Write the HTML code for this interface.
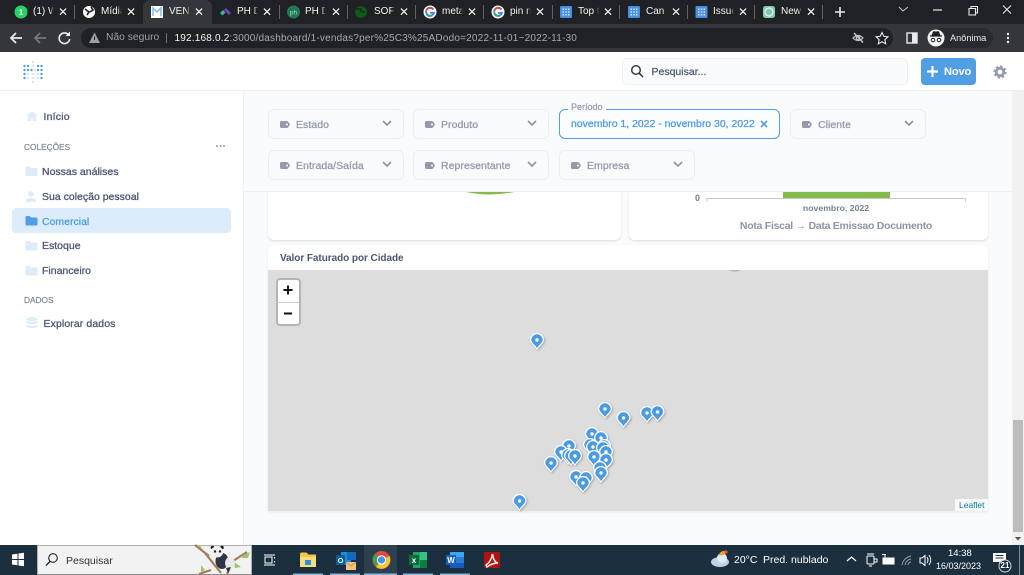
<!DOCTYPE html>
<html lang="pt"><head><meta charset="utf-8"><title>VENDAS</title>
<style>
*{box-sizing:border-box}
html,body{margin:0;padding:0;width:1024px;height:575px;overflow:hidden;background:#fff;font-family:"Liberation Sans",sans-serif}
.a{position:absolute}
.t{position:absolute;white-space:nowrap;line-height:1}
svg{position:absolute;overflow:visible}
.tab{position:absolute;top:5px;color:#f1f3f4;font-size:10px;line-height:14px;white-space:nowrap;overflow:hidden;-webkit-mask-image:linear-gradient(90deg,#000 80%,transparent);mask-image:linear-gradient(90deg,#000 80%,transparent)}
.x{position:absolute;top:6px;color:#f1f3f4;font-size:12px;line-height:12px}
.sep{position:absolute;top:5px;width:1px;height:14px;background:#5f6368}
.side{position:absolute;font-size:10.500px;color:#4c5773;line-height:12px;white-space:nowrap;-webkit-text-stroke:.3px currentColor}
.sec{position:absolute;font-size:8.300px;color:#74838f;line-height:10px;-webkit-text-stroke:.15px currentColor}
.f{position:absolute;height:30px;background:#f9fbfc;border:1.500px solid #eceff2;border-radius:6px}
.fl{position:absolute;top:8.500px;left:27px;font-size:10.500px;color:#949aab;line-height:12px;white-space:nowrap;-webkit-text-stroke:.3px currentColor;letter-spacing:.05px}
</style></head><body>
<svg width="0" height="0" style="position:absolute"><defs>
<g id="pin"><path d="M0 7C-1.500 3.500-7 .5-7-3A7 7 0 0 1 7-3C7 .5 1.500 3.500 0 7Z" fill="#fff"/><path d="M0 5.200C-1.500 2.200-5.700 -.2-5.700-3A5.700 5.700 0 0 1 5.700-3C5.700-.2 1.500 2.200 0 5.200Z" fill="#4a9be0"/><circle cy="-3" r="1.700" fill="#fff"/></g>
<g id="tag"><path d="M0 1.500Q0 0 1.500 0H6.500Q7.500 0 8 .5L10 3.500 8 6.500Q7.500 7 6.500 7H1.500Q0 7 0 5.500Z" fill="#949aab"/><circle cx="7" cy="3.500" r="1" fill="#f9fbfc"/></g>
<path id="chev" d="M0 0L4 4 8 0" fill="none" stroke="#8a93a3" stroke-width="1.600"/>
<path id="fold" d="M0 1.200Q0 0 1.200 0H4L5.500 1.500H10.800Q12 1.500 12 2.700V8.300Q12 9.500 10.800 9.500H1.200Q0 9.500 0 8.300Z"/>
<g id="dots" fill="#cfe4fa"><rect x="2.500" y="2.500" width="1.500" height="1.500"/><rect x="5.300" y="2.500" width="1.500" height="1.500"/><rect x="8" y="2.500" width="1.500" height="1.500"/><rect x="2.500" y="5.300" width="1.500" height="1.500"/><rect x="5.300" y="5.300" width="1.500" height="1.500"/><rect x="8" y="5.300" width="1.500" height="1.500"/><rect x="2.500" y="8" width="1.500" height="1.500"/><rect x="5.300" y="8" width="1.500" height="1.500"/><rect x="8" y="8" width="1.500" height="1.500"/></g>
</defs></svg>

<!-- tab strip -->
<div class="a" style="left:0;top:0;width:1024px;height:24px;background:#202124"></div>
<div class="a" style="left:143px;top:0;width:69px;height:24px;background:#35363a;border-radius:7px 7px 0 0"></div>
<div class="a" style="left:0;top:24px;width:1024px;height:28px;background:#35363a"></div>

<svg style="left:0;top:0" width="830" height="24">
<circle cx="21" cy="12" r="6.500" fill="#25d366"/><text x="21" y="15" font-size="8" font-weight="bold" fill="#fff" text-anchor="middle" font-family="Liberation Sans">1</text>
<circle cx="89" cy="12" r="6" fill="#fff"/><path d="M85 9l4 3-2 3M91 7l2 3-3 2" stroke="#202124" stroke-width="1.600" fill="none"/>
<rect x="151" y="6" width="12" height="12" fill="#fff"/><path d="M153 16V8l4 4 4-4v8" stroke="#8cc0ee" stroke-width="1.600" fill="none"/>
<path d="M220 13l3-3 2.500 2.500-3 3z" fill="#33b5a5"/><path d="M224 10l2-2 5 5-2 2z" fill="#7a3fc4"/>
<circle cx="293.500" cy="12" r="6.500" fill="#1f7a58"/><text x="293.500" y="14.500" font-size="6.500" fill="#a9d8c0" text-anchor="middle" font-family="Liberation Sans">ph</text>
<circle cx="361" cy="12" r="5.800" fill="#0d5c16"/><path d="M356 9h5v3h4" stroke="#202124" stroke-width="1.300" fill="none"/>
<circle cx="430" cy="12" r="6.500" fill="#fff"/><path d="M433.500 9.500A4 4 0 1 0 434 12.800H430" fill="none" stroke="#4285f4" stroke-width="1.800"/><path d="M426.500 10A4 4 0 0 1 433 9.300" fill="none" stroke="#ea4335" stroke-width="1.800"/><path d="M426.400 13.800A4 4 0 0 0 432 15.500" fill="none" stroke="#34a853" stroke-width="1.800"/>
<circle cx="498" cy="12" r="6.500" fill="#fff"/><path d="M501.500 9.500A4 4 0 1 0 502 12.800H498" fill="none" stroke="#4285f4" stroke-width="1.800"/><path d="M494.500 10A4 4 0 0 1 501 9.300" fill="none" stroke="#ea4335" stroke-width="1.800"/><path d="M494.400 13.800A4 4 0 0 0 500 15.500" fill="none" stroke="#34a853" stroke-width="1.800"/>
<g fill="#4a90e2"><rect x="560" y="6" width="12" height="12" rx="1.500"/><rect x="628" y="6" width="12" height="12" rx="1.500"/><rect x="695.500" y="6" width="12" height="12" rx="1.500"/></g>
<use href="#dots" x="560" y="6"/><use href="#dots" x="628" y="6"/><use href="#dots" x="695.500" y="6"/>
<rect x="763" y="6" width="12" height="12" rx="2.500" fill="#7fc8ad"/><circle cx="769" cy="12" r="4" fill="none" stroke="#d8efe6" stroke-width="1.500"/>
<path d="M835 12h10M840 7v10" stroke="#e8eaed" stroke-width="1.600"/>
</svg>
<div class="tab" style="left:33px;width:21px">(1) W</div><div class="x" style="left:58px">✕</div><div class="sep" style="left:74px"></div>
<div class="tab" style="left:101px;width:21px">Mídia</div><div class="x" style="left:126px">✕</div>
<div class="tab" style="left:169px;width:21px">VEND</div><div class="x" style="left:194px">✕</div>
<div class="tab" style="left:237px;width:21px">PH D</div><div class="x" style="left:262px">✕</div><div class="sep" style="left:279px"></div>
<div class="tab" style="left:305px;width:21px">PH D</div><div class="x" style="left:331px">✕</div><div class="sep" style="left:347px"></div>
<div class="tab" style="left:374px;width:21px">SOFT</div><div class="x" style="left:399px">✕</div><div class="sep" style="left:415px"></div>
<div class="tab" style="left:442px;width:21px">meta</div><div class="x" style="left:467px">✕</div><div class="sep" style="left:483px"></div>
<div class="tab" style="left:510px;width:21px">pin n</div><div class="x" style="left:535px">✕</div><div class="sep" style="left:552px"></div>
<div class="tab" style="left:578px;width:21px">Top t</div><div class="x" style="left:603px">✕</div><div class="sep" style="left:619px"></div>
<div class="tab" style="left:646px;width:21px">Can t</div><div class="x" style="left:671px">✕</div><div class="sep" style="left:687px"></div>
<div class="tab" style="left:713px;width:21px">Issue</div><div class="x" style="left:738px">✕</div><div class="sep" style="left:754px"></div>
<div class="tab" style="left:781px;width:21px">New</div><div class="x" style="left:806px">✕</div><div class="sep" style="left:822px"></div>

<svg style="left:0;top:0" width="1024" height="52">
<path d="M899 7l4 4 5-4" fill="none" stroke="#c9cbce" stroke-width="1"/>
<path d="M933 10h9" stroke="#e8eaed" stroke-width="1.200"/>
<path d="M969 8.500h6.500v6.500H969zM971 8.500V6.500h6.500V13H975.500" fill="none" stroke="#e8eaed" stroke-width="1.100"/>
<path d="M1003 5.500l8 8M1011 5.500l-8 8" stroke="#e8eaed" stroke-width="1.100"/>
<path d="M22 38H11.500M16 33l-5 5 5 5" fill="none" stroke="#e8eaed" stroke-width="1.800"/>
<path d="M46 38H35.500M40 33l-5 5 5 5" fill="none" stroke="#74777b" stroke-width="1.800"/>
<path d="M69 35.500A5.300 5.300 0 1 0 69.700 39" fill="none" stroke="#e8eaed" stroke-width="1.600"/><path d="M70 31.500V36h-4.500z" fill="#e8eaed"/>
<path d="M91 28H883A10 10 0 0 1 883 48H91A10 10 0 0 1 91 28Z" fill="#202124"/>
<path d="M94.500 32.500L100 43H89Z" fill="#9aa0a6"/><path d="M94.500 36.500V40" stroke="#202124" stroke-width="1"/>
<path d="M166.500 33v10" stroke="#6f7276"/>
<g fill="none" stroke="#c4c7c9" stroke-width="1.200"><path d="M853 38q5-5 10 0q-5 5-10 0z"/><circle cx="858" cy="38" r="1.700"/><path d="M854 33l9 9.500" stroke-width="1.500"/></g>
<path d="M882 32.500l1.800 3.800 4.100.5-3 2.900.8 4.100-3.700-2-3.700 2 .8-4.100-3-2.900 4.100-.5z" fill="none" stroke="#e8eaed" stroke-width="1.100"/>
<rect x="907" y="33" width="10" height="10" fill="none" stroke="#e8eaed" stroke-width="1.400"/><rect x="912" y="33" width="5" height="10" fill="#e8eaed"/>
<path d="M939 28H983A10 10 0 0 1 983 48H939A10 10 0 0 1 939 28Z" fill="#292a2d"/>
<circle cx="936" cy="38" r="8.500" fill="#f1f3f4"/><path d="M930 36h12M932 36l1.500-4h5l1.500 4" stroke="#202124" stroke-width="1.200" fill="#202124"/><circle cx="933" cy="40" r="1.800" fill="none" stroke="#202124"/><circle cx="939" cy="40" r="1.800" fill="none" stroke="#202124"/>
<g fill="#e8eaed"><circle cx="1008" cy="34" r="1.200"/><circle cx="1008" cy="38" r="1.200"/><circle cx="1008" cy="42" r="1.200"/></g>
</svg>
<div class="t" style="left:106px;top:33px;font-size:10.300px;color:#9aa0a6">Não seguro</div>
<div class="t" style="left:174.500px;top:33.500px;font-size:10px;color:#a6a9ad;letter-spacing:.02em"><span style="color:#f1f3f4">192.168.0.2</span>:3000/dashboard/1-vendas?per%25C3%25ADodo=2022-11-01~2022-11-30</div>
<div class="t" style="left:950px;top:33.500px;font-size:9.200px;color:#e8eaed">Anônima</div>

<!-- app header -->
<div class="a" style="left:0;top:52px;width:1024px;height:39px;background:#fff;border-bottom:1px solid #f0f0f0"></div>
<svg style="left:22px;top:58px" width="24" height="28">
<g fill="#509ee3"><circle cx="2.500" cy="8" r="1.200"/><circle cx="6" cy="8" r="1.200"/><circle cx="16" cy="8" r="1.200"/><circle cx="19.500" cy="8" r="1.200"/><circle cx="2.500" cy="12" r="1.200"/><circle cx="6" cy="12" r="1.200"/><circle cx="9.500" cy="12" r="1.200"/><circle cx="16" cy="12" r="1.200"/><circle cx="19.500" cy="12" r="1.200"/><circle cx="2.500" cy="16" r="1.200"/><circle cx="19.500" cy="16" r="1.200"/><circle cx="2.500" cy="20" r="1.200"/><circle cx="19.500" cy="20" r="1.200"/></g>
<g fill="#cfe3f6"><circle cx="11" cy="4" r="1.100"/><circle cx="11" cy="8" r="1.100"/><circle cx="13" cy="12" r="1.100"/><circle cx="6" cy="16" r="1.100"/><circle cx="11" cy="16" r="1.100"/><circle cx="16" cy="16" r="1.100"/><circle cx="6" cy="20" r="1.100"/><circle cx="11" cy="20" r="1.100"/><circle cx="16" cy="20" r="1.100"/><circle cx="11" cy="24" r="1.100"/></g>
</svg>
<div class="a" style="left:622px;top:58px;width:286px;height:27px;background:#f9fbfc;border:1px solid #eef0f2;border-radius:5px"></div>
<svg style="left:630px;top:64px" width="14" height="14"><circle cx="6" cy="6" r="4.300" fill="none" stroke="#2e353b" stroke-width="1.400"/><path d="M9.200 9.200L13 13" stroke="#2e353b" stroke-width="1.500"/></svg>
<div class="t" style="left:651.500px;top:66.500px;font-size:10.500px;color:#4c5773;-webkit-text-stroke:.25px currentColor">Pesquisar...</div>
<div class="a" style="left:921px;top:58px;width:55px;height:27px;background:#509ee3;border-radius:4px"></div>
<svg style="left:926px;top:65px" width="13" height="13"><path d="M6.500 1v11M1 6.500h11" stroke="#fff" stroke-width="2.200"/></svg>
<div class="t" style="left:944px;top:66.500px;font-size:11px;font-weight:bold;color:#fff;letter-spacing:-.1px">Novo</div>
<svg style="left:993px;top:65px" width="14" height="14"><circle cx="7" cy="7" r="3.800" fill="none" stroke="#949aab" stroke-width="2.800"/><circle cx="7" cy="7" r="5.600" fill="none" stroke="#949aab" stroke-width="2" stroke-dasharray="2.200 2.200"/></svg>

<!-- sidebar -->
<div class="a" style="left:0;top:91px;width:244px;height:454px;background:#fff;border-right:1px solid #f0f0f0"></div>
<div class="a" style="left:12px;top:208px;width:219px;height:25px;background:#ddecfa;border-radius:4px"></div>
<svg style="left:0;top:100px" width="244" height="240">
<path d="M32 11l-5.500 5H28v5h3v-3h2v3h3v-5h1.500z" fill="#ddecfa"/>
<use href="#fold" x="25.500" y="66.500" fill="#ddecfa"/>
<circle cx="31" cy="94" r="2.800" fill="#ddecfa"/><path d="M26 102q0-3.500 3.500-4h3q3.500.5 3.500 4z" fill="#ddecfa"/>
<use href="#fold" x="25.500" y="116" fill="#509ee3"/>
<use href="#fold" x="25.500" y="141" fill="#ddecfa"/>
<use href="#fold" x="25.500" y="166" fill="#ddecfa"/>
<g fill="#ddecfa"><ellipse cx="32" cy="219" rx="5.500" ry="2"/><path d="M26.500 220.500q5.500 3 11 0v2.500q-5.500 3-11 0zM26.500 224.500q5.500 3 11 0v2.500q-5.500 3-11 0z"/></g>
<g fill="#8d95a3"><circle cx="217" cy="46" r="1"/><circle cx="220.500" cy="46" r="1"/><circle cx="224" cy="46" r="1"/></g>
</svg>
<div class="side" style="left:43.500px;top:110.500px;letter-spacing:.2px">Início</div>
<div class="sec" style="left:24px;top:142px">COLEÇÕES</div>
<div class="side" style="left:42px;top:166px">Nossas análises</div>
<div class="side" style="left:42px;top:191px">Sua coleção pessoal</div>
<div class="side" style="left:42px;top:215.500px;color:#509ee3">Comercial</div>
<div class="side" style="left:42px;top:240px">Estoque</div>
<div class="side" style="left:42px;top:265px">Financeiro</div>
<div class="sec" style="left:24px;top:295px">DADOS</div>
<div class="side" style="left:43.500px;top:318px;letter-spacing:.1px">Explorar dados</div>

<!-- main -->
<div class="a" style="left:244px;top:91px;width:768px;height:454px;background:#f9fbfc"></div>
<div class="a" style="left:1012px;top:91px;width:12px;height:454px;background:#f1f1f1"></div>
<div class="a" style="left:1013px;top:420px;width:9.500px;height:112px;background:#bdbdbd"></div>
<svg style="left:1014px;top:536px" width="8" height="6"><path d="M1 1h6L4 4.500z" fill="#505050"/></svg>

<div class="a" style="left:268px;top:192px;width:353px;height:48px;background:#fff;border-radius:0 0 6px 6px;box-shadow:0 1px 2px rgba(0,0,0,.12)"></div>
<div class="a" style="left:629px;top:192px;width:359px;height:48px;background:#fff;border-radius:0 0 6px 6px;box-shadow:0 1px 2px rgba(0,0,0,.12)"></div>
<svg style="left:466px;top:192px" width="50" height="4"><path d="M0 0Q24 5 48 0Z" fill="#84bb4c"/></svg>
<div class="a" style="left:783px;top:192px;width:107px;height:6px;background:#84bb4c"></div>
<svg style="left:700px;top:195px" width="270" height="10"><path d="M7 6.500V3.500M7 3.500H265.500V6.500" fill="none" stroke="#c9c9c9" stroke-width="1"/></svg>
<div class="t" style="left:695px;top:193.500px;font-size:9px;font-weight:bold;color:#74838f">0</div>
<div class="t" style="left:736px;width:200px;top:204px;text-align:center;font-size:8.700px;font-weight:bold;color:#74838f">novembro, 2022</div>
<div class="t" style="left:686px;width:300px;top:221px;text-align:center;font-size:10.500px;font-weight:bold;color:#8e94a6;letter-spacing:-.27px">Nota Fiscal → Data Emissao Documento</div>

<!-- filter bar -->
<div class="a" style="left:244px;top:91px;width:768px;height:101px;background:#f9fbfd"></div>
<div class="a" style="left:244px;top:191px;width:768px;height:1px;background:#eef0f2"></div>
<div class="f" style="left:268px;top:109px;width:136px"><svg style="left:10.500px;top:10.500px" width="10" height="7"><use href="#tag"/></svg><div class="fl">Estado</div><svg style="left:114px;top:11px" width="9" height="5"><use href="#chev"/></svg></div>
<div class="f" style="left:413px;top:109px;width:136px"><svg style="left:10.500px;top:10.500px" width="10" height="7"><use href="#tag"/></svg><div class="fl">Produto</div><svg style="left:114px;top:11px" width="9" height="5"><use href="#chev"/></svg></div>
<div class="f" style="left:790px;top:109px;width:136px"><svg style="left:10.500px;top:10.500px" width="10" height="7"><use href="#tag"/></svg><div class="fl">Cliente</div><svg style="left:114px;top:11px" width="9" height="5"><use href="#chev"/></svg></div>
<div class="f" style="left:268px;top:150px;width:136px"><svg style="left:10.500px;top:10.500px" width="10" height="7"><use href="#tag"/></svg><div class="fl">Entrada/Saída</div><svg style="left:114px;top:11px" width="9" height="5"><use href="#chev"/></svg></div>
<div class="f" style="left:413px;top:150px;width:136px"><svg style="left:10.500px;top:10.500px" width="10" height="7"><use href="#tag"/></svg><div class="fl">Representante</div><svg style="left:114px;top:11px" width="9" height="5"><use href="#chev"/></svg></div>
<div class="f" style="left:559px;top:150px;width:136px"><svg style="left:10.500px;top:10.500px" width="10" height="7"><use href="#tag"/></svg><div class="fl">Empresa</div><svg style="left:114px;top:11px" width="9" height="5"><use href="#chev"/></svg></div>
<div class="a" style="left:559px;top:109px;width:221px;height:30px;background:#fafcfe;border:1.500px solid #509ee3;border-radius:6px"></div>
<div class="t" style="left:568px;top:103px;padding:0 3px;background:#f9fbfd;font-size:9px;color:#949aab;-webkit-text-stroke:.2px currentColor">Período</div>
<div class="t" style="left:571px;top:118.500px;font-size:10.500px;color:#509ee3;-webkit-text-stroke:.3px currentColor;letter-spacing:-.02px">novembro 1, 2022 - novembro 30, 2022</div>
<svg style="left:760px;top:120px" width="8" height="8"><path d="M1 1l6 6M7 1L1 7" stroke="#509ee3" stroke-width="1.600"/></svg>

<!-- map card -->
<div class="a" style="left:268px;top:245px;width:720px;height:265.500px;background:#fff;border-radius:6px 6px 0 0;box-shadow:0 1px 2px rgba(0,0,0,.08)"></div>
<div class="t" style="left:280px;top:253.500px;font-size:10px;font-weight:bold;color:#4c5773;letter-spacing:-.06px">Valor Faturado por Cidade</div>
<div class="a" style="left:268px;top:270px;width:720px;height:240.500px;background:#ddd"></div>
<svg style="left:729px;top:270px" width="12" height="3"><path d="M0 0Q6 3.500 12 0Z" fill="#b5b5b5"/></svg>
<div class="a" style="left:275.500px;top:277.500px;width:25px;height:48px;background:#fff;border:2px solid #b4b4b4;border-radius:4px"></div>
<div class="a" style="left:277px;top:301.500px;width:22px;height:1px;background:#ccc"></div>
<svg style="left:277px;top:280px" width="22" height="44"><path d="M6.500 10h9M11 5.500v9M7 33.500h8" stroke="#111" stroke-width="1.900"/></svg>
<div class="t" style="left:955px;top:499px;width:33px;height:11.500px;background:rgba(255,255,255,.8);font-size:8.500px;line-height:12px;padding-left:4px;color:#0078a8">Leaflet</div>

<svg style="left:0;top:0;filter:drop-shadow(1px 1px 1px rgba(0,0,0,.25))" width="1024" height="545">
<use href="#pin" x="537" y="343"/><use href="#pin" x="605" y="412"/><use href="#pin" x="623.500" y="421"/><use href="#pin" x="647" y="416"/><use href="#pin" x="657.500" y="415"/>
<use href="#pin" x="569" y="449"/><use href="#pin" x="561" y="455"/><use href="#pin" x="551" y="466"/><use href="#pin" x="568" y="458"/><use href="#pin" x="571" y="459"/><use href="#pin" x="575" y="459"/>
<use href="#pin" x="592" y="437"/><use href="#pin" x="601" y="441"/><use href="#pin" x="590" y="448"/><use href="#pin" x="604" y="449"/><use href="#pin" x="593" y="450"/><use href="#pin" x="603" y="451"/><use href="#pin" x="606" y="455"/><use href="#pin" x="594" y="460"/><use href="#pin" x="606" y="463"/><use href="#pin" x="600" y="471"/><use href="#pin" x="601" y="476"/>
<use href="#pin" x="576" y="480"/><use href="#pin" x="586" y="481"/><use href="#pin" x="583" y="486"/><use href="#pin" x="519.500" y="504"/>
</svg>

<!-- taskbar -->
<div class="a" style="left:0;top:545px;width:1024px;height:30px;background:#1b2f3e"></div>
<div class="a" style="left:37px;top:545px;width:215px;height:30px;background:#f2f2f2;border:1px solid #b0b0b0;border-bottom:1px solid #8c8c8c"></div>
<div class="a" style="left:364px;top:545px;width:33px;height:30px;background:#2d404f"></div>
<svg style="left:0;top:545px" width="1024" height="30">
<path d="M12 9.500l5.500-.8V14H12zM18.500 8.500L24 7.700V14h-5.500zM12 15h5.500v5.300l-5.500-.8zM18.500 15H24v6.300l-5.500-.8z" fill="#fff"/>
<circle cx="53" cy="13" r="4.300" fill="none" stroke="#222" stroke-width="1.100"/><path d="M50 16.500l-4 4" stroke="#222" stroke-width="1.300"/>
<!-- panda -->
<path d="M195 0l14 11M205 8l16 20M247 7l-14 9-6 13M199 29l12-4" stroke="#a87a58" stroke-width="2.200" fill="none"/>
<path d="M243 10l7-3-2 6-6 0zM197 1l3-1 2 4zM201 20l4 5-4 2zM234 17l7 5-6 1z" fill="#9cc56a"/>
<ellipse cx="222" cy="16" rx="6.500" ry="8" fill="#2e3644"/><ellipse cx="230" cy="18" rx="5" ry="6" fill="#e8e8e6"/><path d="M226 23l5-1-3 6z" fill="#2e3644"/>
<circle cx="212.500" cy="2.500" r="1.800" fill="#222"/><circle cx="222" cy="2.500" r="1.800" fill="#222"/><ellipse cx="217" cy="7" rx="6.300" ry="5.500" fill="#f0f0ee"/><circle cx="215" cy="6.500" r="1.200" fill="#222"/><circle cx="220" cy="6.500" r="1.200" fill="#222"/>
<path d="M264 10h11M264 20h11" stroke="#fff" stroke-width="1.100"/><rect x="265" y="12" width="7" height="6" fill="none" stroke="#fff"/><path d="M274.500 12v1.500M274.500 16v1.500" stroke="#fff" stroke-width="1.200"/>
<path d="M300 9q0-1.500 1.500-1.500h5l2 2H316v11.500h-16z" fill="#f4c64f"/><path d="M300 12h16v10h-16z" fill="#f9dc7c"/><rect x="305" y="15" width="6" height="5" fill="#2d8fd6"/>
<rect x="341" y="7" width="10" height="13" fill="#1490df"/><rect x="347" y="7" width="9" height="8" fill="#0f6cbd"/><rect x="336" y="10" width="9" height="10" rx="1" fill="#0e5a9e"/><text x="340.500" y="18" font-size="7.500" font-weight="bold" fill="#fff" text-anchor="middle" font-family="Liberation Sans">O</text><rect x="346" y="17" width="10" height="8" fill="#f3c27c"/><path d="M346 17l5 4 5-4" stroke="#b98a4a" fill="none" stroke-width=".7"/>
<circle cx="381.500" cy="15" r="9" fill="#e04a3a"/><path d="M381.500 15L389.500 11A9 9 0 0 1 376 22z" fill="#f7c62f"/><path d="M376 22L372.500 15A9 9 0 0 1 375 9l6.500 6z" fill="#3fa14f"/><circle cx="381.500" cy="15" r="4.700" fill="#fff"/><circle cx="381.500" cy="15" r="3.600" fill="#4a8fe8"/>
<rect x="413" y="7" width="14" height="16" fill="#21a366"/><rect x="420" y="7" width="7" height="8" fill="#33c481"/><rect x="420" y="15" width="7" height="8" fill="#107c41"/><rect x="409" y="10" width="10" height="10" fill="#0f6c3a"/><text x="414" y="18" font-size="8" font-weight="bold" fill="#fff" text-anchor="middle" font-family="Liberation Sans">x</text>
<rect x="450" y="7" width="14" height="16" fill="#2b7cd3"/><rect x="450" y="7" width="14" height="5" fill="#41a5ee"/><rect x="450" y="18" width="14" height="5" fill="#185abd"/><rect x="446" y="10" width="10" height="10" fill="#1a5fbc"/><text x="451" y="18" font-size="8" font-weight="bold" fill="#fff" text-anchor="middle" font-family="Liberation Sans">W</text>
<rect x="484" y="7" width="16" height="16" rx="2" fill="#b3130f"/><path d="M486 20q5-3 6.500-11q1 8 5.500 9q-6 0-11 4z" fill="none" stroke="#fff" stroke-width="1.400"/>
<g fill="#8ab6d8"><rect x="293" y="28.500" width="30" height="1.500"/><rect x="330" y="28.500" width="30" height="1.500"/><rect x="364" y="28.500" width="33" height="1.500"/><rect x="403" y="28.500" width="30" height="1.500"/><rect x="440" y="28.500" width="30" height="1.500"/></g>
<ellipse cx="720" cy="17" rx="9" ry="5" fill="#bcd3ea"/><circle cx="722" cy="13" r="5" fill="#e0ebf5"/><path d="M719 10.500A5 5 0 0 1 727 7l-3 3z" fill="#f2a23a"/><circle cx="726" cy="7" r="1.600" fill="#e85b2c"/>
<g fill="none" stroke="#fff" stroke-width="1"><path d="M847 16l4.500-4 4.500 4" stroke-width="1.200"/><rect x="867" y="11" width="7" height="8" rx="1"/><path d="M867 9h7M874 14h3v3h-3M869 21h3"/><rect x="883" y="13" width="11" height="6" fill="#fff"/><path d="M882 9.500h4M885 9.500v3"/><path d="M902 20a11 11 0 0 1 9-9M905 20a7 7 0 0 1 6-6M908 20a3 3 0 0 1 3-3" stroke="#9aa6ae" stroke-width=".9"/><path d="M920 13h2l3-2.500v10L922 18h-2zM927 12q2 3 0 6M929 10q3.500 5 0 10"/></g>
<path d="M993 8h13v9h-4v3l-3-3h-6z" fill="#fff"/><path d="M995.500 10.500h8M995.500 13h8" stroke="#1b2f3e"/><circle cx="1005" cy="21" r="6" fill="#1b2f3e" stroke="#cfd4d8" stroke-width="1"/>
<rect x="1019" y="0" width="1" height="30" fill="#7d8a94"/>
</svg>
<div class="t" style="left:66px;top:556px;font-size:10.500px;color:#333">Pesquisar</div>
<div class="t" style="left:734px;top:554.500px;font-size:10.500px;color:#fff">20°C</div>
<div class="t" style="left:763px;top:554.500px;font-size:10.500px;color:#fff">Pred. nublado</div>
<div class="t" style="left:948px;top:548.500px;font-size:9.500px;color:#fff">14:38</div>
<div class="t" style="left:936px;top:562px;font-size:9px;color:#fff">16/03/2023</div>
<div class="t" style="left:1000.500px;top:562px;font-size:8px;font-weight:bold;color:#fff">21</div>
</body></html>
